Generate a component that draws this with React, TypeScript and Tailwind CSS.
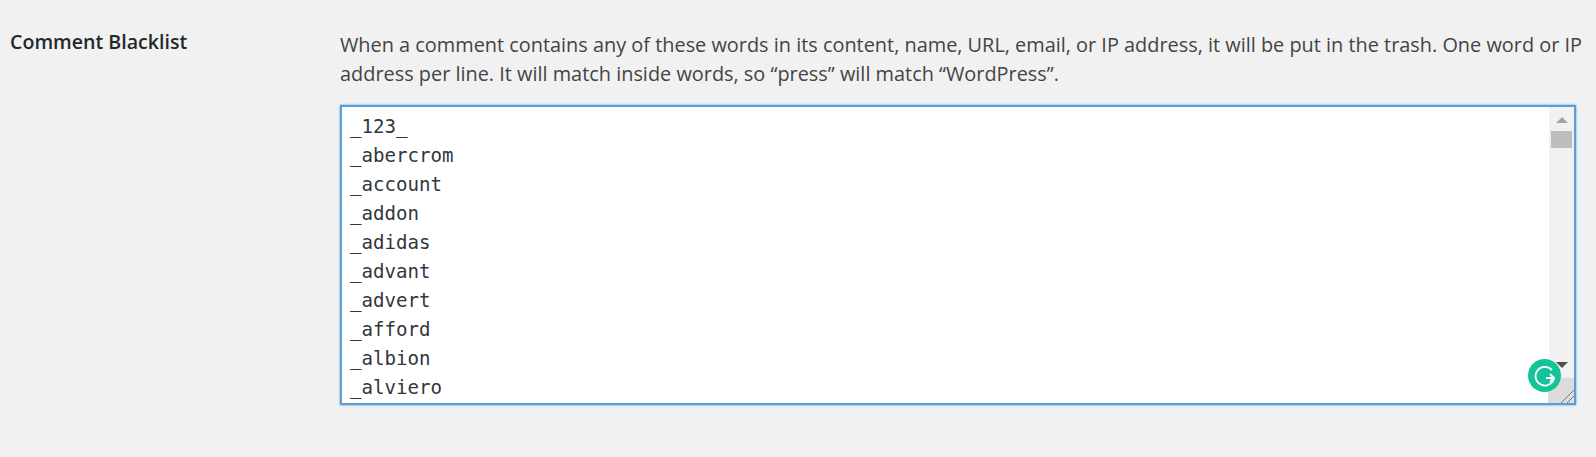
const words = ["_123_","_abercrom","_account","_addon","_adidas","_advant","_advert","_afford","_albion","_alviero"];

export default function App() {
  return (
    <div className="h-[457px] w-[1596px] overflow-hidden bg-[#f1f1f1] flex font-['Open_Sans','Noto_Sans',sans-serif]">
      <div className="w-[340px] shrink-0 pl-[10px] pt-[26px] text-[19.6px] leading-[32px] font-semibold text-[#23282d]">Comment Blacklist</div>
      <div className="w-[1236px] shrink-0 pt-[30px]">
        <p className="text-[19.9px] leading-[29px] text-[#444] m-0 h-[75px] whitespace-nowrap">
          When a comment contains any of these words in its content, name, URL, email, or IP address, it will be put in the trash. One word or IP<br />
          address per line. It will match inside words, so “press” will match “WordPress”.
        </p>
        <div className="relative h-[300px] border-2 border-[#5b9dd9] bg-white flex shadow-[0_0_2px_rgba(30,140,190,0.8)]">
          <div className="flex-1 pl-[8px] pt-[5px] font-['DejaVu_Sans_Mono',monospace] text-[19.1px] leading-[29px] text-[#32373c] overflow-hidden">
            {words.map((w) => <div key={w}>{w}</div>)}
          </div>
          <div className="w-[25px] shrink-0 bg-[#f1f1f1] flex flex-col items-center">
            <div className="mt-[10px] h-0 w-0 border-x-[6px] border-x-transparent border-b-[6px] border-b-[#a3a3a3]" />
            <div className="mt-[8px] h-[17px] w-[21px] bg-[#bdbdbd]" />
            <div className="mt-[214px] h-0 w-0 border-x-[6px] border-x-transparent border-t-[6px] border-t-[#505050]" />
            <div className="mt-auto h-[25px] w-[26px] shrink-0 self-end bg-[#dcdcdc] flex items-end justify-end">
              <svg width="14" height="14" viewBox="0 0 14 14" stroke="#777" strokeWidth="1" fill="none"><path d="M1 14 14 1M7 14 14 7" /></svg>
            </div>
          </div>
          <div className="absolute left-[1186px] top-[252px] h-[33px] w-[33px] rounded-full bg-[#15c39a] flex items-center justify-center">
            <svg width="24" height="24" viewBox="0 0 24 24" fill="none" stroke="#fff" strokeWidth="1.8">
              <path d="M19 6.2A9.3 9.3 0 1 0 21 14H13" />
              <path d="M17 10 21 14 17 18" />
            </svg>
          </div>
        </div>
      </div>
    </div>
  );
}
